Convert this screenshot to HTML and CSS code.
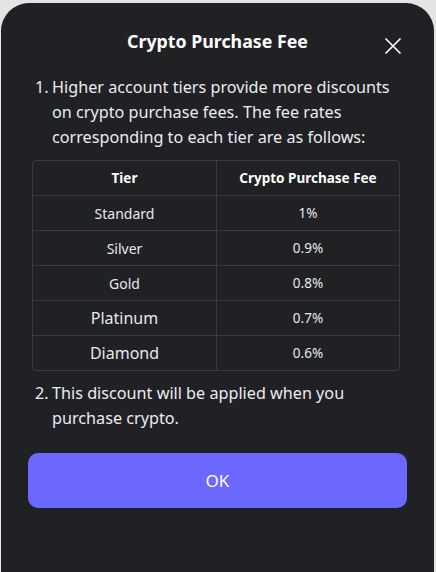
FILE: index.html
```html
<!DOCTYPE html>
<html>
<head>
<meta charset="utf-8">
<link rel="stylesheet" href="styles.css">
</head>
<body>
<div class="sheet">
  <div class="header">
    <div class="title">Crypto Purchase Fee</div>
    <svg class="close" width="18" height="18" viewBox="0 0 18 18"><path d="M1.5 1.5L16.5 16.5M16.5 1.5L1.5 16.5" stroke="#ffffff" stroke-width="1.6" fill="none"/></svg>
  </div>
  <div class="item"><span class="num">1.</span><span class="txt">Higher account tiers provide more discounts on crypto purchase fees. The fee rates corresponding to each tier are as follows:</span></div>
  <table class="fees">
    <thead><tr><th>Tier</th><th>Crypto Purchase Fee</th></tr></thead>
    <tbody>
      <tr><td>Standard</td><td class="v">1%</td></tr>
      <tr><td>Silver</td><td class="v">0.9%</td></tr>
      <tr><td>Gold</td><td class="v">0.8%</td></tr>
      <tr><td class="big">Platinum</td><td class="v">0.7%</td></tr>
      <tr><td class="big">Diamond</td><td class="v">0.6%</td></tr>
    </tbody>
  </table>
  <div class="item second"><span class="num">2.</span><span class="txt">This discount will be applied when you purchase crypto.</span></div>
  <button class="ok">OK</button>
</div>
</body>
</html>
```
FILE: styles.css
```css
html, body { margin: 0; padding: 0; }
body {
  background: #e4e4e4;
  font-family: "Noto Sans", "Noto Sans CJK SC", sans-serif;
  color: #eeeeef;
  height: 572px;
  overflow: hidden;
}
.sheet {
  margin: 3px 2px 0 1px;
  background: #202125;
  border-radius: 28px 28px 0 0;
  height: 569px;
  padding: 0 28px 0 26px;
  box-sizing: border-box;
}
.header {
  position: relative;
  height: 72px;
  display: flex;
  align-items: center;
  justify-content: center;
}
.title {
  font-size: 17.8px;
  font-weight: 700;
  color: #ffffff;
  margin-top: 4px;
  margin-left: 2px;
}
.close {
  position: absolute;
  right: 4px;
  top: 34px;
}
.item {
  display: flex;
  font-size: 16.2px;
  line-height: 25px;
  color: #ececee;
  padding: 0 8px 0 8px;
}
.num { width: 17px; flex: none; }
.txt { flex: 1; }
.fees {
  margin: 10px 0 0 5px;
  width: 368px;
  border-collapse: separate;
  border-spacing: 0;
  border: 1px solid #3a3b40;
  border-radius: 4px;
  table-layout: fixed;
}
.fees th, .fees td {
  height: 34px;
  padding: 0;
  text-align: center;
  border-bottom: 1px solid #3a3b40;
  font-size: 13.5px;
  color: #e8e8ea;
}
.fees th:first-child, .fees td:first-child {
  width: 183px;
  border-right: 1px solid #3a3b40;
}
.fees tbody tr:last-child td { border-bottom: none; }
.fees th { font-weight: 700; color: #ffffff; }
.fees td { font-size: 14px; }
.fees td.v { font-size: 13.5px; }
.fees td.big { font-size: 16px; }
.second { margin-top: 10px; }
.ok {
  display: block;
  margin: 22px 0 0 1px;
  width: 379px;
  height: 55px;
  border: none;
  border-radius: 10px;
  background: #6c67fe;
  color: #ffffff;
  font-family: inherit;
  font-size: 17px;
}
```
